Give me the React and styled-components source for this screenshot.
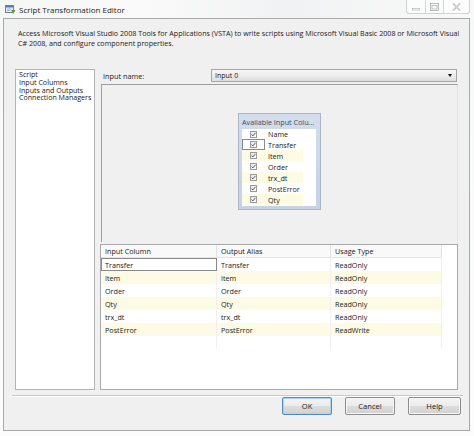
import React from "react";
import styled, { createGlobalStyle } from "styled-components";

const Global = createGlobalStyle`
  html, body { margin: 0; padding: 0; }
  body {
    width: 474px; height: 436px; overflow: hidden;
    font-family: "Open Sans", "Noto Sans", "DejaVu Sans", sans-serif;
    background: #fbfbfb;
  }
  * { box-sizing: border-box; }
`;

const Page = styled.div`
  width: 474px;
  height: 436px;
  display: flex;
  flex-direction: column;
  background: linear-gradient(180deg, #eef1f0 0px, #f7f8f8 18px, #fcfcfc 100%);
`;

const TitleBar = styled.div`
  height: 18px;
  display: flex;
  align-items: center;
  padding-left: 5px;
  background: linear-gradient(90deg, #f4f7f3 0%, #fafafa 30%, #f1f2f3 60%, #f9f9f9 100%);
`;

const TitleText = styled.span`
  margin-left: 3px;
  font-size: 8px;
  color: #1a1a1a;
  white-space: nowrap;
`;

const Controls = styled.div`
  margin-left: auto;
  margin-right: 4px;
  align-self: flex-start;
  display: flex;
  height: 14px;
  border: 1px solid #d0d3d6;
  border-top: none;
  border-radius: 0 0 3px 3px;
  background: rgba(255, 255, 255, 0.6);
`;

const Ctl = styled.div`
  width: ${(p) => p.$w}px;
  display: flex;
  align-items: center;
  justify-content: center;
  border-left: ${(p) => (p.$first ? "none" : "1px solid #d6d8da")};
`;

const Window = styled.div`
  margin: 0 4px 0 3px;
  height: 413px;
  border: 1px solid #a7a9ab;
  background: #f0f0f0;
  display: flex;
  flex-direction: column;
`;

const Header = styled.div`
  height: 50px;
  padding: 9px 0 0 14px;
  font-size: 7.15px;
  line-height: 10px;
  color: #1a1a1a;
`;

const Line = styled.div`
  white-space: nowrap;
`;

const Main = styled.div`
  height: 321px;
  display: flex;
  padding-left: 11px;
  gap: 5px;
`;

const Nav = styled.div`
  width: 80px;
  background: #fff;
  border: 1px solid #b4b4b4;
  padding: 1px 3px;
  font-size: 7.1px;
  line-height: 7.8px;
  color: #1a1a1a;
`;

const NavItem = styled.div`
  white-space: nowrap;
  height: 7.8px;
`;

const Right = styled.div`
  width: 358px;
  display: flex;
  flex-direction: column;
`;

const InputRow = styled.div`
  height: 13px;
  display: flex;
  align-items: center;
`;

const Label = styled.div`
  width: 111px;
  padding-left: 3px;
  font-size: 7.3px;
  color: #1a1a1a;
`;

const Select = styled.div`
  width: 246px;
  height: 13px;
  border: 1px solid #a5a5a5;
  background: linear-gradient(180deg, #f6f6f6 0%, #ececec 50%, #dedede 100%);
  display: flex;
  align-items: center;
  padding: 0 4px 0 3px;
  font-size: 7px;
  color: #1a1a1a;
`;

const Arrow = styled.span`
  margin-left: auto;
  width: 0;
  height: 0;
  border-left: 2.5px solid transparent;
  border-right: 2.5px solid transparent;
  border-top: 3px solid #111;
`;

const Canvas = styled.div`
  margin-top: 2px;
  margin-left: 1px;
  height: 158px;
  border-top: 1px solid #9e9e9e;
  border-left: 1px solid #9e9e9e;
  border-right: 1px solid #e2e2e2;
  background: #f0f0f0;
  padding: 28px 0 0 136px;
`;

const ColBox = styled.div`
  width: 83px;
  height: 97px;
  border: 1px solid #a9b6c9;
  background: linear-gradient(180deg, #d3ddeb 0%, #c5d2e5 100%);
  padding: 0 4px 3px 3px;
  display: flex;
  flex-direction: column;
`;

const ColTitle = styled.div`
  height: 15px;
  display: flex;
  align-items: center;
  font-size: 7.2px;
  color: #3a4a60;
  white-space: nowrap;
  overflow: hidden;
`;

const ColList = styled.div`
  flex: 1;
  background: #fff;
  display: flex;
  flex-direction: column;
`;

const ColRow = styled.div`
  height: ${(p) => (p.$head ? 10 : 11)}px;
  display: flex;
  align-items: stretch;
`;

const CheckCell = styled.div`
  width: 23px;
  display: flex;
  align-items: center;
  justify-content: center;
  background: ${(p) => (p.$alt ? "#fdfbe3" : "#fff")};
  border: 1px solid ${(p) => (p.$focus ? "#8a8a8a" : "transparent")};
`;

const NameCell = styled.div`
  width: 38px;
  display: flex;
  align-items: center;
  padding-left: 3px;
  font-size: 7.2px;
  color: #1a1a1a;
  background: ${(p) => (p.$alt ? "#fdfbe3" : "#fff")};
`;

const Box = styled.span`
  width: 7px;
  height: 7px;
  border: 1px solid #9a9a9a;
  background: linear-gradient(135deg, #e6e6e6, #fafafa);
  display: flex;
  align-items: center;
  justify-content: center;
`;

const Grid = styled.div`
  margin-top: 2px;
  height: 146px;
  width: 358px;
  background: #fff;
  border: 1px solid #a8a8a8;
  display: flex;
  flex-direction: column;
`;

const GRow = styled.div`
  height: 13px;
  display: flex;
`;

const GCell = styled.div`
  width: ${(p) => p.$w}px;
  display: flex;
  align-items: center;
  padding-left: 4px;
  font-size: 7.2px;
  color: #1a1a1a;
  white-space: nowrap;
  background: ${(p) => (p.$head ? "#f9f9f9" : p.$alt ? "#fdfbe3" : "#fff")};
  border-right: 1px solid ${(p) => (p.$head ? "#e2e2e2" : "#f0f0f0")};
  border-bottom: ${(p) => (p.$head ? "1px solid #e6e6e6" : "none")};
  outline: ${(p) => (p.$focus ? "1px solid #8a8a8a" : "none")};
  outline-offset: -1px;
`;

const Separator = styled.div`
  margin: 5px 6px 0 8px;
  height: 2px;
  border-top: 1px solid #c9c9c9;
  border-bottom: 1px solid #ffffff;
`;

const Buttons = styled.div`
  height: 18px;
  display: flex;
  justify-content: flex-end;
  gap: 13px;
  padding-right: 8px;
`;

const Button = styled.div`
  width: ${(p) => p.$w}px;
  height: 18px;
  border: 1px solid ${(p) => (p.$default ? "#4d8cc4" : "#8c8c8c")};
  border-radius: 2px;
  background: linear-gradient(180deg, #f4f4f4 0%, #ebebeb 50%, #dcdcdc 51%, #d2d2d2 100%);
  box-shadow: inset 0 0 0 1px ${(p) => (p.$default ? "#a9d3f1" : "#f7f7f7")};
  display: flex;
  align-items: center;
  justify-content: center;
  font-size: 7.6px;
  color: #1a1a1a;
`;

const CheckIcon = () => (
  <svg width="5" height="5" viewBox="0 0 5 5">
    <path d="M0.6 2.6 L1.9 3.9 L4.4 0.9" fill="none" stroke="#3b4a5c" strokeWidth="0.9" />
  </svg>
);

const AppIcon = () => (
  <svg width="11" height="11" viewBox="0 0 11 11">
    <rect x="0.5" y="1.5" width="8" height="7" fill="#e9eef6" stroke="#6a7f9e" />
    <rect x="1" y="2" width="7" height="1.5" fill="#4f7cc0" />
    <path d="M2 5h4M2 6.5h3" stroke="#7a8aa0" strokeWidth="0.6" />
    <path d="M6 6 L10.5 6 L8.2 10 Z" fill="#6a9a3a" />
  </svg>
);

const cols = [
  { name: "Transfer", alt: false, focus: true },
  { name: "Item", alt: true },
  { name: "Order", alt: false },
  { name: "trx_dt", alt: true },
  { name: "PostError", alt: false },
  { name: "Qty", alt: true },
];

const rows = [
  ["Transfer", "Transfer", "ReadOnly"],
  ["Item", "Item", "ReadOnly"],
  ["Order", "Order", "ReadOnly"],
  ["Qty", "Qty", "ReadOnly"],
  ["trx_dt", "trx_dt", "ReadOnly"],
  ["PostError", "PostError", "ReadWrite"],
  ["", "", ""],
];

const widths = [116, 114, 111];

export default function App() {
  return (
    <Page>
      <Global />
      <TitleBar>
        <AppIcon />
        <TitleText>Script Transformation Editor</TitleText>
        <Controls>
          <Ctl $w={18} $first>
            <svg width="8" height="8" viewBox="0 0 8 8">
              <rect x="0.5" y="5.5" width="7" height="1.5" fill="none" stroke="#b5b8bb" strokeWidth="0.7" />
            </svg>
          </Ctl>
          <Ctl $w={18}>
            <svg width="9" height="8" viewBox="0 0 9 8">
              <rect x="0.5" y="0.5" width="8" height="7" fill="none" stroke="#a9acb0" strokeWidth="0.8" />
              <rect x="2" y="2.5" width="5" height="3.5" fill="none" stroke="#a9acb0" strokeWidth="0.7" />
            </svg>
          </Ctl>
          <Ctl $w={26}>
            <svg width="9" height="8" viewBox="0 0 9 8">
              <path d="M1 0.5 L8 7.5 M8 0.5 L1 7.5" stroke="#b4b7ba" strokeWidth="1.6" />
              <path d="M1 0.5 L8 7.5 M8 0.5 L1 7.5" stroke="#f4f4f4" strokeWidth="0.5" />
            </svg>
          </Ctl>
        </Controls>
      </TitleBar>
      <Window>
        <Header>
          <Line>
            Access Microsoft Visual Studio 2008 Tools for Applications (VSTA) to write scripts using Microsoft Visual Basic 2008 or Microsoft Visual
          </Line>
          <Line>C# 2008, and configure component properties.</Line>
        </Header>
        <Main>
          <Nav>
            <NavItem>Script</NavItem>
            <NavItem>Input Columns</NavItem>
            <NavItem>Inputs and Outputs</NavItem>
            <NavItem>Connection Managers</NavItem>
          </Nav>
          <Right>
            <InputRow>
              <Label>Input name:</Label>
              <Select>
                Input 0
                <Arrow />
              </Select>
            </InputRow>
            <Canvas>
              <ColBox>
                <ColTitle>Available Input Colu...</ColTitle>
                <ColList>
                  <ColRow $head>
                    <CheckCell>
                      <Box>
                        <CheckIcon />
                      </Box>
                    </CheckCell>
                    <NameCell>Name</NameCell>
                  </ColRow>
                  {cols.map((c) => (
                    <ColRow key={c.name}>
                      <CheckCell $alt={c.alt} $focus={c.focus}>
                        <Box>
                          <CheckIcon />
                        </Box>
                      </CheckCell>
                      <NameCell $alt={c.alt}>{c.name}</NameCell>
                    </ColRow>
                  ))}
                </ColList>
              </ColBox>
            </Canvas>
            <Grid>
              <GRow>
                {["Input Column", "Output Alias", "Usage Type"].map((h, i) => (
                  <GCell key={h} $w={widths[i]} $head>
                    {h}
                  </GCell>
                ))}
              </GRow>
              {rows.map((r, ri) => (
                <GRow key={ri}>
                  {r.map((v, ci) => (
                    <GCell
                      key={ci}
                      $w={widths[ci]}
                      $alt={ri % 2 === 1}
                      $focus={ri === 0 && ci === 0}
                    >
                      {v}
                    </GCell>
                  ))}
                </GRow>
              ))}
            </Grid>
          </Right>
        </Main>
        <Separator />
        <Buttons>
          <Button $w={50} $default>OK</Button>
          <Button $w={50}>Cancel</Button>
          <Button $w={53}>Help</Button>
        </Buttons>
      </Window>
    </Page>
  );
}
